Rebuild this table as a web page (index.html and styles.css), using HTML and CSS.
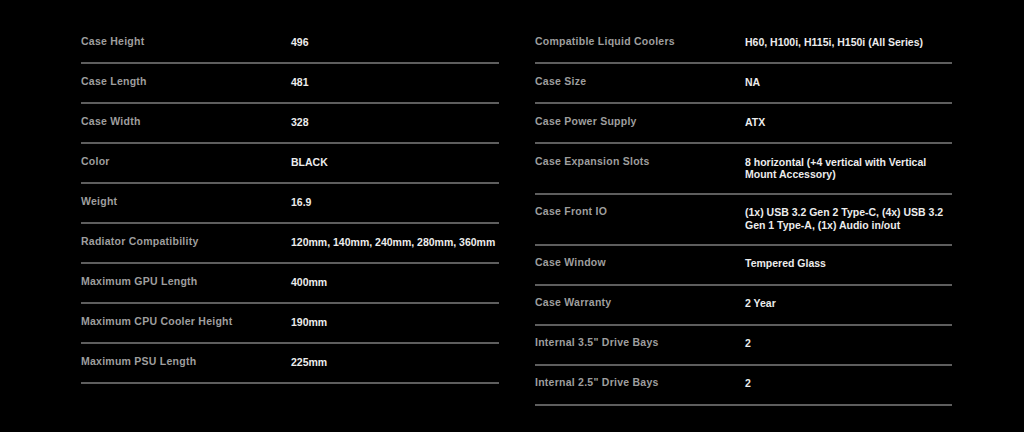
FILE: index.html
```html
<!DOCTYPE html>
<html>
<head>
<meta charset="utf-8">
<link rel="stylesheet" href="styles.css">
</head>
<body>
<div class="specs">
  <div class="col">
    <div class="row"><div class="label">Case Height</div><div class="value">496</div></div>
    <div class="row"><div class="label">Case Length</div><div class="value">481</div></div>
    <div class="row"><div class="label">Case Width</div><div class="value">328</div></div>
    <div class="row"><div class="label">Color</div><div class="value">BLACK</div></div>
    <div class="row"><div class="label">Weight</div><div class="value">16.9</div></div>
    <div class="row"><div class="label">Radiator Compatibility</div><div class="value">120mm, 140mm, 240mm, 280mm, 360mm</div></div>
    <div class="row"><div class="label">Maximum GPU Length</div><div class="value">400mm</div></div>
    <div class="row"><div class="label">Maximum CPU Cooler Height</div><div class="value">190mm</div></div>
    <div class="row"><div class="label">Maximum PSU Length</div><div class="value">225mm</div></div>
  </div>
  <div class="col">
    <div class="row"><div class="label">Compatible Liquid Coolers</div><div class="value">H60, H100i, H115i, H150i (All Series)</div></div>
    <div class="row"><div class="label">Case Size</div><div class="value">NA</div></div>
    <div class="row"><div class="label">Case Power Supply</div><div class="value">ATX</div></div>
    <div class="row"><div class="label">Case Expansion Slots</div><div class="value">8 horizontal (+4 vertical with Vertical Mount Accessory)</div></div>
    <div class="row"><div class="label">Case Front IO</div><div class="value">(1x) USB 3.2 Gen 2 Type-C, (4x) USB 3.2 Gen 1 Type-A, (1x) Audio in/out</div></div>
    <div class="row"><div class="label">Case Window</div><div class="value">Tempered Glass</div></div>
    <div class="row"><div class="label">Case Warranty</div><div class="value">2 Year</div></div>
    <div class="row"><div class="label">Internal 3.5" Drive Bays</div><div class="value">2</div></div>
    <div class="row"><div class="label">Internal 2.5" Drive Bays</div><div class="value">2</div></div>
  </div>
</div>
</body>
</html>
```
FILE: styles.css
```css
html, body {
  margin: 0;
  padding: 0;
  background: #000;
  height: 100%;
}
body {
  font-family: "Liberation Sans", Arial, sans-serif;
  font-weight: bold;
  font-size: 10.5px;
}
.specs {
  display: grid;
  grid-template-columns: 418px 417px;
  column-gap: 36px;
  padding: 24px 0 0 81px;
  align-items: start;
}
.row {
  display: grid;
  grid-template-columns: 210px minmax(0, 1fr);
  align-items: start;
  padding: 7.5px 0 12.5px;
  border-bottom: 2px solid #5e5e5e;
}
.label {
  color: #9e9e9e;
  line-height: 18px;
  letter-spacing: 0.25px;
}
.value {
  color: #ececec;
  line-height: 12.4px;
  padding-top: 4px;
}
```
